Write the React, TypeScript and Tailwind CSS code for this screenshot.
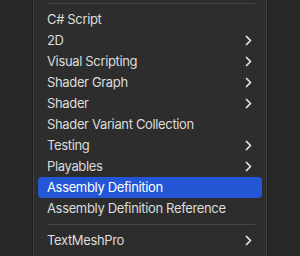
import React from 'react';

type Item = { label: string; sub?: boolean; active?: boolean } | 'sep';

const items: Item[] = [
  'sep',
  { label: 'C# Script' },
  { label: '2D', sub: true },
  { label: 'Visual Scripting', sub: true },
  { label: 'Shader Graph', sub: true },
  { label: 'Shader', sub: true },
  { label: 'Shader Variant Collection' },
  { label: 'Testing', sub: true },
  { label: 'Playables', sub: true },
  { label: 'Assembly Definition', active: true },
  { label: 'Assembly Definition Reference' },
  'sep',
  { label: 'TextMeshPro', sub: true },
  'sep',
];

const Chevron = () => (
  <svg width="7" height="11" viewBox="0 0 7 11" fill="none">
    <path d="M1.5 1.5L5.5 5.5L1.5 9.5" stroke="#e6e6e6" strokeWidth="1.7" strokeLinecap="round" strokeLinejoin="round" />
  </svg>
);

export default function App() {
  return (
    <div className="w-[300px] h-[256px] overflow-hidden bg-[#282828] pl-[32px]" style={{ fontFamily: 'Inter, "Liberation Sans", sans-serif' }}>
      <div className="w-[236px] -mt-[2px] bg-[#2d2d2d] border-x border-b border-[#1c1c1c] shadow-[inset_1px_0_0_#444,inset_-1px_0_0_#444]">
        {items.map((it, i) =>
          it === 'sep' ? (
            <div key={i} className="py-[5px] pl-[14px] pr-[12px]">
              <div className="h-px bg-[#454545]" />
            </div>
          ) : (
            <div key={i} className="px-[5px]">
              <div
                className={`h-[21px] flex items-center justify-between pl-[9px] pr-[10px] rounded-[4px] text-[13px] tracking-[-0.35px] ${
                  it.active ? 'bg-[#2457d6] text-white' : 'text-[#dcdcdc]'
                }`}
              >
                <span>{it.label}</span>
                {it.sub && <Chevron />}
              </div>
            </div>
          )
        )}
      </div>
    </div>
  );
}
